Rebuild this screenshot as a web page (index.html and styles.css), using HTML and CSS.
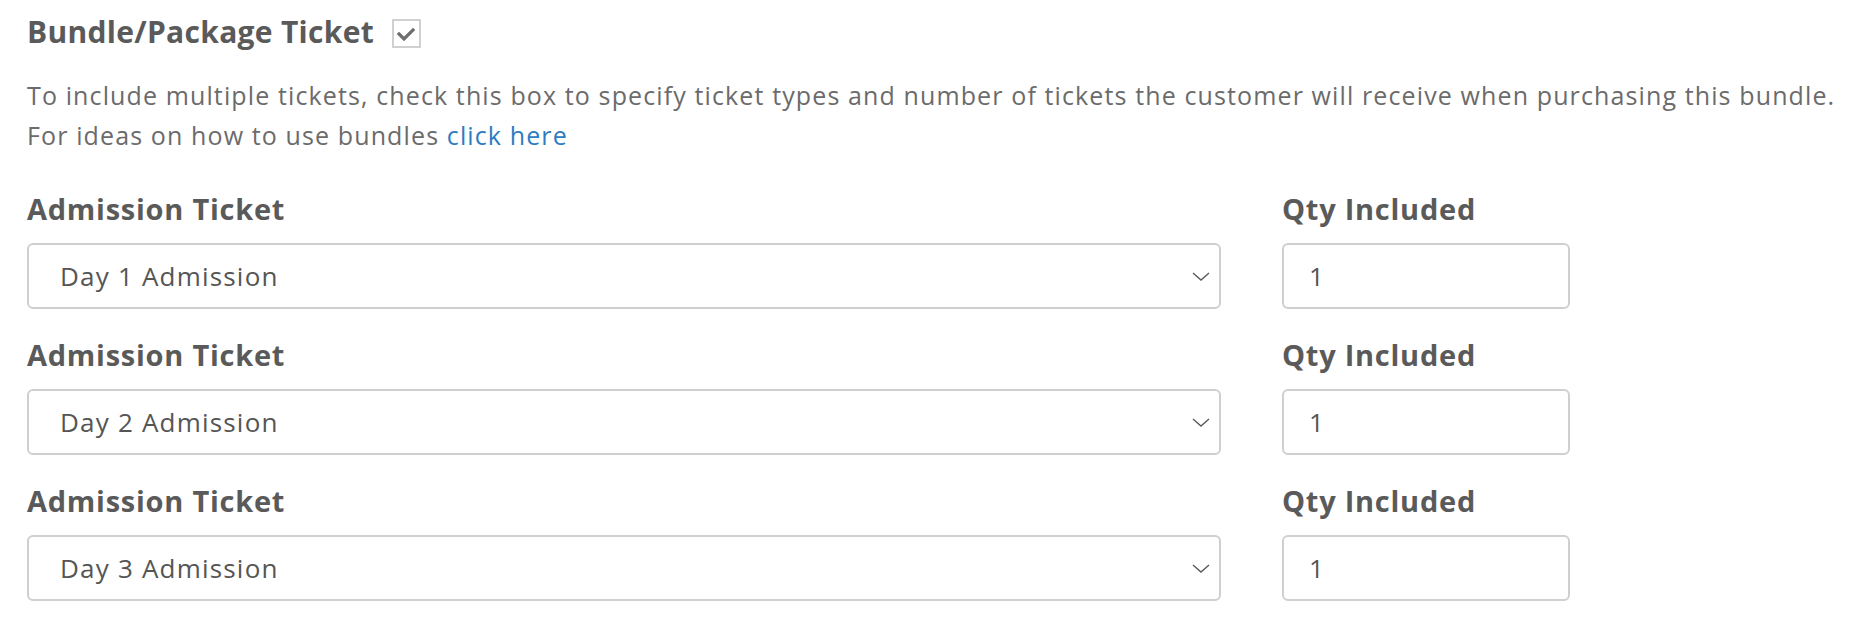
FILE: index.html
```html
<!DOCTYPE html>
<html lang="en">
<head>
<meta charset="utf-8">
<title>Bundle/Package Ticket</title>
<link rel="stylesheet" href="styles.css">
</head>
<body>
<div class="panel">
  <div class="title-row">
    <h2 class="title">Bundle/Package Ticket</h2>
    <span class="checkbox">
      <svg viewBox="0 0 25 25" width="25" height="25" aria-hidden="true">
        <path d="M5 13 L10 18 L19 9" fill="none" stroke="#6e6e6e" stroke-width="3.2" stroke-linecap="square" stroke-linejoin="miter"/>
      </svg>
    </span>
  </div>
  <p class="desc">To include multiple tickets, check this box to specify ticket types and number of tickets the customer will receive when purchasing this bundle.<br>For ideas on how to use bundles <a href="#" class="link">click here</a></p>

  <div class="rows">
    <div class="row">
      <div class="field">
        <label class="label">Admission Ticket</label>
        <div class="select"><span>Day 1 Admission</span>
          <svg class="chev" viewBox="0 0 18 9" width="18" height="9"><path d="M1 1 L9 8 L17 1" fill="none" stroke="#5a5a5a" stroke-width="1.4"/></svg>
        </div>
      </div>
      <div class="field">
        <label class="label">Qty Included</label>
        <div class="input">1</div>
      </div>
    </div>
    <div class="row">
      <div class="field">
        <label class="label">Admission Ticket</label>
        <div class="select"><span>Day 2 Admission</span>
          <svg class="chev" viewBox="0 0 18 9" width="18" height="9"><path d="M1 1 L9 8 L17 1" fill="none" stroke="#5a5a5a" stroke-width="1.4"/></svg>
        </div>
      </div>
      <div class="field">
        <label class="label">Qty Included</label>
        <div class="input">1</div>
      </div>
    </div>
    <div class="row">
      <div class="field">
        <label class="label">Admission Ticket</label>
        <div class="select"><span>Day 3 Admission</span>
          <svg class="chev" viewBox="0 0 18 9" width="18" height="9"><path d="M1 1 L9 8 L17 1" fill="none" stroke="#5a5a5a" stroke-width="1.4"/></svg>
        </div>
      </div>
      <div class="field">
        <label class="label">Qty Included</label>
        <div class="input">1</div>
      </div>
    </div>
  </div>
</div>
</body>
</html>
```

FILE: styles.css
```css
html, body {
  margin: 0;
  padding: 0;
  background: #ffffff;
}
body {
  font-family: "Open Sans", "Noto Sans", sans-serif;
  color: #5c5c5c;
}
.panel {
  padding: 12px 0 0 27px;
}
.title-row {
  display: flex;
  align-items: center;
  gap: 18px;
  height: 40px;
}
.title {
  margin: 0;
  font-size: 30px;
  line-height: 40px;
  font-weight: 700;
  color: #5a5a5a;
  letter-spacing: 0.3px;
}
.checkbox {
  width: 29px;
  height: 29px;
  box-sizing: border-box;
  border: 2px solid #d0d0d0;
  display: flex;
  align-items: center;
  justify-content: center;
  margin-top: 2px;
}
.checkbox svg {
  display: block;
  width: 25px;
  height: 25px;
}
.desc {
  margin: 23px 0 0 0;
  font-size: 25px;
  line-height: 40px;
  color: #6b6b6b;
  letter-spacing: 1.12px;
  white-space: nowrap;
}
.link {
  color: #2d7cc1;
  text-decoration: none;
}
.rows {
  margin-top: 34px;
  display: flex;
  flex-direction: column;
  gap: 26px;
}
.row {
  display: grid;
  grid-template-columns: 1194px 288px;
  column-gap: 61px;
}
.field {
  display: flex;
  flex-direction: column;
  gap: 14px;
}
.label {
  font-size: 29px;
  line-height: 40px;
  font-weight: 700;
  color: #5a5a5a;
  letter-spacing: 0.75px;
}
.select, .input {
  height: 66px;
  box-sizing: border-box;
  border: 2px solid #cfcfcf;
  border-radius: 6px;
  display: flex;
  align-items: center;
  font-size: 26px;
  color: #555555;
  letter-spacing: 1.2px;
}
.select {
  padding: 0 9px 0 31px;
  justify-content: space-between;
}
.input {
  padding: 0 25px;
}
.chev {
  display: block;
}
```
